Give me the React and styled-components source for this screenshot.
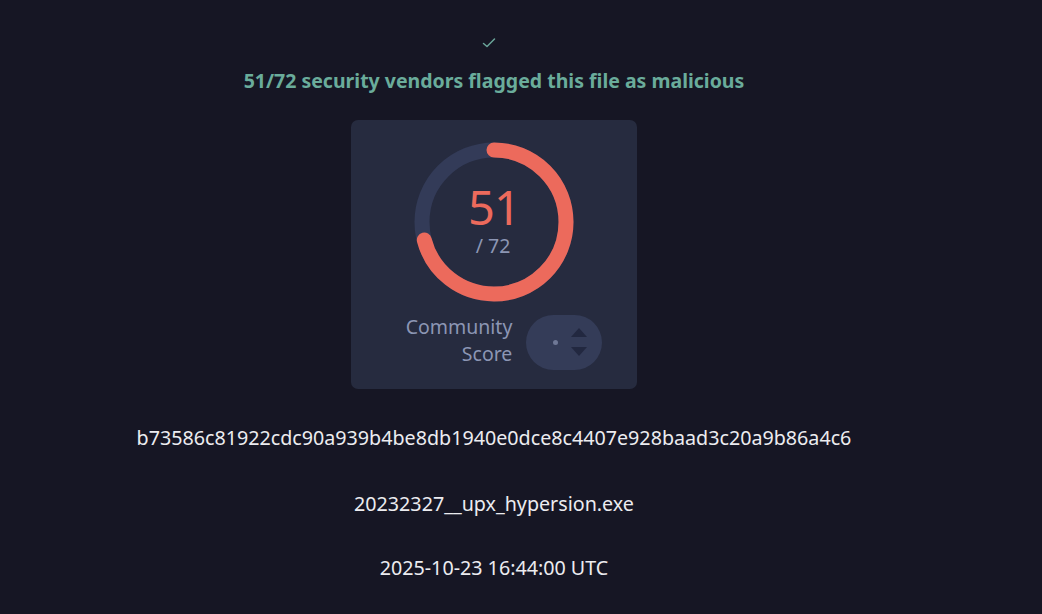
import React from "react";
import styled, { createGlobalStyle } from "styled-components";

const GlobalStyle = createGlobalStyle`
  html, body {
    margin: 0;
    padding: 0;
    background: #161624;
  }
  body {
    font-family: "Noto Sans", "Open Sans", sans-serif;
  }
`;

const Page = styled.div`
  width: 988px;
  height: 614px;
  display: flex;
  flex-direction: column;
  align-items: center;
  background: #161624;
  color: #ececf0;
  box-sizing: border-box;
  padding-top: 36px;
`;

const Check = styled.div`
  width: 14px;
  height: 14px;
  display: flex;
  margin-left: -10px;
`;

const Title = styled.h2`
  margin: 17px 0 0;
  font-size: 19.5px;
  line-height: 27px;
  font-weight: 700;
  color: #6aac9b;
`;

const Card = styled.div`
  margin-top: 26px;
  width: 286px;
  height: 269px;
  box-sizing: border-box;
  padding-top: 22px;
  background: #262b3f;
  border-radius: 7px;
  display: flex;
  flex-direction: column;
  align-items: center;
`;

const Ring = styled.div`
  position: relative;
  width: 160px;
  height: 160px;
`;

const RingText = styled.div`
  position: absolute;
  inset: 0;
  display: flex;
  flex-direction: column;
  align-items: center;
  justify-content: center;
  padding-top: 1px;
  box-sizing: border-box;
`;

const Score = styled.div`
  font-size: 47px;
  line-height: 40px;
  color: #ec6a5c;
  font-weight: 400;
  letter-spacing: -1px;
`;

const Total = styled.div`
  font-size: 19.5px;
  line-height: 24px;
  margin-top: 7px;
  color: #8c96b4;
  margin-left: -2px;
`;

const VoteRow = styled.div`
  margin-top: 11px;
  display: flex;
  align-items: center;
  gap: 14px;
  margin-left: 20px;
`;

const VoteLabel = styled.div`
  text-align: right;
  font-size: 19.5px;
  line-height: 27px;
  margin-bottom: 4px;
  color: #8c96b4;
`;

const VotePill = styled.div`
  width: 76px;
  height: 55px;
  border-radius: 28px;
  background: #343c58;
  display: flex;
  align-items: center;
  justify-content: flex-end;
  padding-right: 15px;
  gap: 13px;
  box-sizing: border-box;
`;

const Dot = styled.span`
  width: 5px;
  height: 5px;
  border-radius: 50%;
  background: #6f7896;
`;

const Arrows = styled.div`
  display: flex;
  flex-direction: column;
  gap: 10px;
`;

const InfoLine = styled.div`
  font-size: 19.7px;
  line-height: 26px;
  color: #ececf0;
  margin-top: ${(p) => p.$gap}px;
`;

function Gauge({ value, total }) {
  const r = 72;
  const c = 2 * Math.PI * r;
  const frac = value / total;
  return (
    <Ring>
      <svg width="160" height="160" viewBox="0 0 160 160">
        <circle cx="80" cy="80" r={r} fill="none" stroke="#333b58" strokeWidth="15" />
        <circle
          cx="80"
          cy="80"
          r={r}
          fill="none"
          stroke="#ec6a5c"
          strokeWidth="15"
          strokeLinecap="round"
          strokeDasharray={`${c * frac} ${c}`}
          transform="rotate(-90 80 80)"
        />
      </svg>
      <RingText>
        <Score>{value}</Score>
        <Total>/ {total}</Total>
      </RingText>
    </Ring>
  );
}

export default function App() {
  return (
    <>
      <GlobalStyle />
      <Page>
        <Check>
          <svg width="14" height="14" viewBox="0 0 14 14">
            <path d="M1.5 7.5 L5 10.5 L12.5 3" fill="none" stroke="#6aa59a" strokeWidth="1.5" strokeLinecap="round" strokeLinejoin="round" />
          </svg>
        </Check>
        <Title>51/72 security vendors flagged this file as malicious</Title>
        <Card>
          <Gauge value={51} total={72} />
          <VoteRow>
            <VoteLabel>
              Community
              <br />
              Score
            </VoteLabel>
            <VotePill>
              <Dot />
              <Arrows>
                <svg width="16" height="9" viewBox="0 0 16 9">
                  <path d="M8 0 L16 9 L0 9 Z" fill="#222840" />
                </svg>
                <svg width="16" height="9" viewBox="0 0 16 9">
                  <path d="M0 0 L16 0 L8 9 Z" fill="#222840" />
                </svg>
              </Arrows>
            </VotePill>
          </VoteRow>
        </Card>
        <InfoLine $gap={36}>b73586c81922cdc90a939b4be8db1940e0dce8c4407e928baad3c20a9b86a4c6</InfoLine>
        <InfoLine $gap={40}>20232327__upx_hypersion.exe</InfoLine>
        <InfoLine $gap={38}>2025-10-23 16:44:00 UTC</InfoLine>
      </Page>
    </>
  );
}
